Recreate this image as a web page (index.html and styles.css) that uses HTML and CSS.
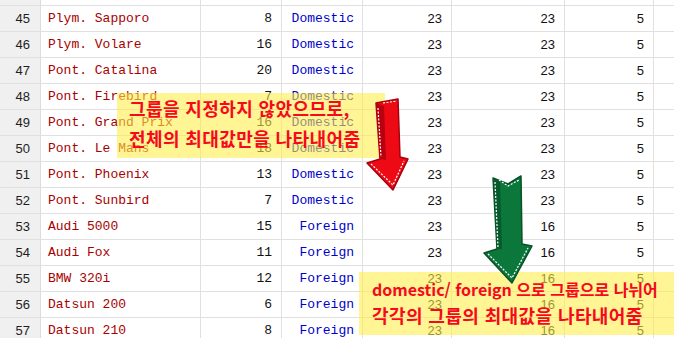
FILE: index.html
```html
<!DOCTYPE html>
<html lang="ko">
<head>
<meta charset="utf-8">
<title>Data Editor</title>
<link rel="stylesheet" href="styles.css">
</head>
<body>
<div class="page">
  <div class="sheet">
    <div class="row top"><div class="c num"></div><div class="c"></div><div class="c"></div><div class="c"></div><div class="c"></div><div class="c"></div><div class="c"></div><div class="c last"></div></div>
    <div class="row"><div class="c num">45</div><div class="c str">Plym. Sapporo</div><div class="c mono">8</div><div class="c lbl">Domestic</div><div class="c val">23</div><div class="c val">23</div><div class="c val">5</div><div class="c last"></div></div>
    <div class="row"><div class="c num">46</div><div class="c str">Plym. Volare</div><div class="c mono">16</div><div class="c lbl">Domestic</div><div class="c val">23</div><div class="c val">23</div><div class="c val">5</div><div class="c last"></div></div>
    <div class="row"><div class="c num">47</div><div class="c str">Pont. Catalina</div><div class="c mono">20</div><div class="c lbl">Domestic</div><div class="c val">23</div><div class="c val">23</div><div class="c val">5</div><div class="c last"></div></div>
    <div class="row"><div class="c num">48</div><div class="c str">Pont. Firebird</div><div class="c mono">7</div><div class="c lbl">Domestic</div><div class="c val">23</div><div class="c val">23</div><div class="c val">5</div><div class="c last"></div></div>
    <div class="row"><div class="c num">49</div><div class="c str">Pont. Grand Prix</div><div class="c mono">16</div><div class="c lbl">Domestic</div><div class="c val">23</div><div class="c val">23</div><div class="c val">5</div><div class="c last"></div></div>
    <div class="row"><div class="c num">50</div><div class="c str">Pont. Le Mans</div><div class="c mono">18</div><div class="c lbl">Domestic</div><div class="c val">23</div><div class="c val">23</div><div class="c val">5</div><div class="c last"></div></div>
    <div class="row"><div class="c num">51</div><div class="c str">Pont. Phoenix</div><div class="c mono">13</div><div class="c lbl">Domestic</div><div class="c val">23</div><div class="c val">23</div><div class="c val">5</div><div class="c last"></div></div>
    <div class="row"><div class="c num">52</div><div class="c str">Pont. Sunbird</div><div class="c mono">7</div><div class="c lbl">Domestic</div><div class="c val">23</div><div class="c val">23</div><div class="c val">5</div><div class="c last"></div></div>
    <div class="row"><div class="c num">53</div><div class="c str">Audi 5000</div><div class="c mono">15</div><div class="c lbl">Foreign</div><div class="c val">23</div><div class="c val">16</div><div class="c val">5</div><div class="c last"></div></div>
    <div class="row"><div class="c num">54</div><div class="c str">Audi Fox</div><div class="c mono">11</div><div class="c lbl">Foreign</div><div class="c val">23</div><div class="c val">16</div><div class="c val">5</div><div class="c last"></div></div>
    <div class="row"><div class="c num">55</div><div class="c str">BMW 320i</div><div class="c mono">12</div><div class="c lbl">Foreign</div><div class="c val">23</div><div class="c val">16</div><div class="c val">5</div><div class="c last"></div></div>
    <div class="row"><div class="c num">56</div><div class="c str">Datsun 200</div><div class="c mono">6</div><div class="c lbl">Foreign</div><div class="c val">23</div><div class="c val">16</div><div class="c val">5</div><div class="c last"></div></div>
    <div class="row"><div class="c num">57</div><div class="c str">Datsun 210</div><div class="c mono">8</div><div class="c lbl">Foreign</div><div class="c val">23</div><div class="c val">16</div><div class="c val">5</div><div class="c last"></div></div>
  </div>

  <div class="note note1">
    <p class="big">그룹을 지정하지 않았으므로,</p>
    <p class="big">전체의 최대값만을 나타내어줌</p>
  </div>

  <div class="note note2">
    <p class="small">domestic/ foreign 으로 그룹으로 나뉘어</p>
    <p class="big">각각의 그룹의 최대값을 나타내어줌</p>
  </div>

  <svg class="arrows" width="674" height="338" viewBox="0 0 674 338" aria-hidden="true">
    <!-- red arrow -->
    <polygon points="376,103 398,99 400,157 408,159 393,190 367,163 380,159" fill="#ee0a14" stroke="#a8000c" stroke-width="1.5" stroke-linejoin="round"/>
    <polygon points="376,103 384,106 386,160 380,159" fill="#b8000e"/>
    <polyline points="378,108 381,157" fill="none" stroke="#fff" stroke-width="1.2" stroke-dasharray="2 1.5"/>
    <polyline points="383,103 397,101" fill="none" stroke="#fff" stroke-width="1.2" stroke-dasharray="2 1.5"/>
    <polyline points="371,164 393,185 404,161" fill="none" stroke="#fff" stroke-width="1.2" stroke-dasharray="2 1.5" stroke-linejoin="round"/>
    <!-- green arrow -->
    <polygon points="493,178 508,184 521,176 522,244 532,246 512,283 484,253 497,249" fill="#0c773b" stroke="#075229" stroke-width="1.5" stroke-linejoin="round"/>
    <polygon points="493,178 500,181 502,249 497,249" fill="#075a2c"/>
    <polyline points="495,182 498,247" fill="none" stroke="#fff" stroke-width="1.2" stroke-dasharray="2 1.5"/>
    <polyline points="499,180 508,186 519,180" fill="none" stroke="#fff" stroke-width="1.2" stroke-dasharray="2 1.5"/>
    <polyline points="488,254 512,278 528,248" fill="none" stroke="#fff" stroke-width="1.2" stroke-dasharray="2 1.5" stroke-linejoin="round"/>
  </svg>
</div>
</body>
</html>
```

FILE: styles.css
```css
* { box-sizing: border-box; }

html, body {
  margin: 0;
  padding: 0;
  background: #ffffff;
}

.page {
  position: relative;
  width: 674px;
  height: 338px;
  overflow: hidden;
}

.sheet {
  display: flex;
  flex-direction: column;
}

.row {
  display: grid;
  grid-template-columns: 41px 160px 81px 81px 89px 113px 89px 1fr;
  height: 26px;
}

.row.top {
  height: 6px;
}

.c {
  border-right: 1px solid #e0e0e0;
  border-bottom: 1px solid #e0e0e0;
  line-height: 25px;
  font-size: 13px;
  white-space: nowrap;
  overflow: hidden;
}

.c.last {
  border-right: none;
}

.num {
  background: #f0f0f0;
  border-right-color: #dcdcdc;
  text-align: right;
  padding-right: 10px;
  font-family: "Liberation Sans", Arial, sans-serif;
  color: #1e1e1e;
}

.str {
  font-family: "Liberation Mono", "Courier New", monospace;
  color: #a80000;
  padding-left: 7px;
}

.mono {
  font-family: "Liberation Mono", "Courier New", monospace;
  color: #111111;
  text-align: right;
  padding-right: 9px;
}

.lbl {
  font-family: "Liberation Mono", "Courier New", monospace;
  color: #0000cc;
  text-align: right;
  padding-right: 8px;
}

.val {
  font-family: "Liberation Sans", Arial, sans-serif;
  color: #111111;
  text-align: right;
  padding-right: 9px;
}

.note {
  position: absolute;
  background: rgba(255, 238, 70, 0.58);
  color: #f6081e;
  font-family: "Noto Sans CJK KR", "Noto Sans", sans-serif;
  font-weight: 700;
  white-space: nowrap;
  overflow: hidden;
}

.note p {
  margin: 0;
}

.note .big {
  font-size: 18px;
  line-height: 30px;
  letter-spacing: 0.4px;
}

.note1 {
  left: 117px;
  top: 93px;
  width: 268px;
  height: 65px;
  padding-left: 12px;
}

.note2 {
  left: 359px;
  top: 272px;
  width: 315px;
  height: 63px;
  padding: 5px 0 0 13px;
}

.note2 .small {
  font-size: 16px;
  line-height: 24px;
}

.note2 .big {
  line-height: 29px;
}

.arrows {
  position: absolute;
  left: 0;
  top: 0;
  pointer-events: none;
}
```
